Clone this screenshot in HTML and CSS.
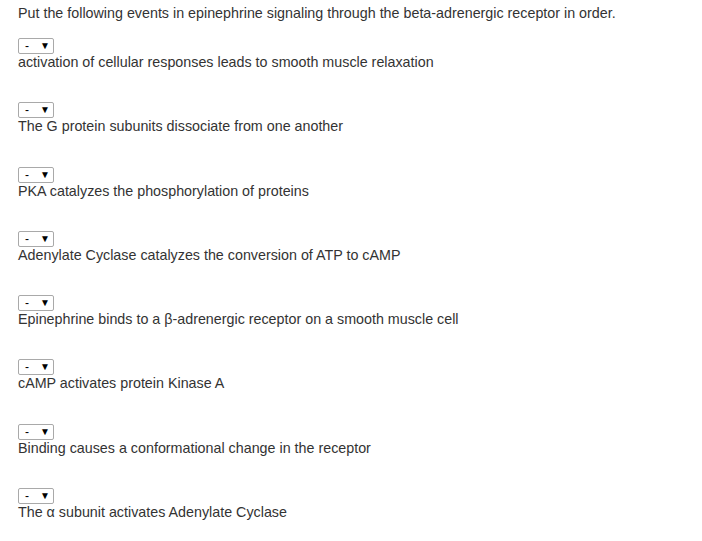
FILE: index.html
```html
<!DOCTYPE html>
<html>
<head>
<meta charset="utf-8">
<link rel="stylesheet" href="styles.css">
</head>
<body>
<div class="page">
  <p class="prompt">Put the following events in epinephrine signaling through the beta-adrenergic receptor in order.</p>
  <ol class="items">
    <li class="item"><span class="sel"><span class="dash">-</span><span class="arrow">▼</span></span><span class="label">activation of cellular responses leads to smooth muscle relaxation</span></li>
    <li class="item"><span class="sel"><span class="dash">-</span><span class="arrow">▼</span></span><span class="label">The G protein subunits dissociate from one another</span></li>
    <li class="item"><span class="sel"><span class="dash">-</span><span class="arrow">▼</span></span><span class="label">PKA catalyzes the phosphorylation of proteins</span></li>
    <li class="item"><span class="sel"><span class="dash">-</span><span class="arrow">▼</span></span><span class="label">Adenylate Cyclase catalyzes the conversion of ATP to cAMP</span></li>
    <li class="item"><span class="sel"><span class="dash">-</span><span class="arrow">▼</span></span><span class="label">Epinephrine binds to a β-adrenergic receptor on a smooth muscle cell</span></li>
    <li class="item"><span class="sel"><span class="dash">-</span><span class="arrow">▼</span></span><span class="label">cAMP activates protein Kinase A</span></li>
    <li class="item"><span class="sel"><span class="dash">-</span><span class="arrow">▼</span></span><span class="label">Binding causes a conformational change in the receptor</span></li>
    <li class="item"><span class="sel"><span class="dash">-</span><span class="arrow">▼</span></span><span class="label">The α subunit activates Adenylate Cyclase</span></li>
  </ol>
</div>
</body>
</html>
```
FILE: styles.css
```css
html, body { margin: 0; padding: 0; background: #fff; }
.page {
  padding: 5px 18px 0 18px;
  font-family: "Liberation Sans", Arial, sans-serif;
  font-size: 14.3px;
  color: #333;
}
.prompt { margin: 0; line-height: 16px; }
.items {
  list-style: none;
  margin: 17px 0 0 0;
  padding: 0;
  display: flex;
  flex-direction: column;
  gap: 32.3px;
}
.item { display: flex; flex-direction: column; align-items: flex-start; }
.sel {
  box-sizing: border-box;
  width: 36px;
  height: 16px;
  border: 1px solid #a9a9a9;
  border-radius: 2px;
  display: flex;
  align-items: center;
  padding-left: 6px;
  font-size: 12px;
  color: #000;
  line-height: 14px;
}
.dash { width: 15px; }
.arrow { font-size: 10px; }
.label { line-height: 16px; }
```
